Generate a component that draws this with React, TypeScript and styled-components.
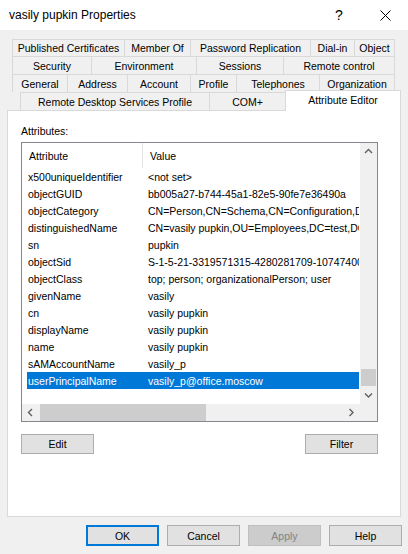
import React from "react";
import styled, { createGlobalStyle } from "styled-components";

const GlobalStyle = createGlobalStyle`
  html, body {
    margin: 0;
    padding: 0;
    background: #f0f0f0;
  }
  * {
    box-sizing: border-box;
  }
`;

const SWindow = styled.div`
  width: 408px;
  height: 554px;
  display: flex;
  flex-direction: column;
  background: #f0f0f0;
  font-family: "Liberation Sans", Arial, sans-serif;
  font-size: 10.5px;
  color: #000;
  overflow: hidden;
`;

const STitleBar = styled.div`
  height: 30px;
  background: #fff;
  display: flex;
  align-items: center;
  padding-left: 9px;
  flex-shrink: 0;
`;

const STitle = styled.div`
  flex: 1;
  font-size: 12px;
`;

const SWinButton = styled.div`
  width: 46px;
  height: 30px;
  display: grid;
  place-items: center;
  font-size: 14px;
`;

const STabStrip = styled.div`
  margin-top: 9px;
  display: flex;
  flex-direction: column;
`;

const STabRow = styled.div<{ $indent: number; $h: number }>`
  display: flex;
  height: ${(p) => p.$h}px;
  padding-left: ${(p) => p.$indent}px;
`;

const STab = styled.div<{ $w: number; $active?: boolean }>`
  width: ${(p) => p.$w}px;
  flex-shrink: 0;
  display: flex;
  align-items: center;
  justify-content: center;
  white-space: nowrap;
  border-top: 1px solid #d9d9d9;
  border-left: 1px solid #d9d9d9;
  background: #f0f0f0;
  &:last-child {
    border-right: 1px solid #d9d9d9;
  }
  ${(p) =>
    p.$active &&
    `
    background: #fff;
    margin-top: -2px;
    height: calc(100% + 3px);
    padding-bottom: 2px;
    position: relative;
    z-index: 1;
  `}
`;

const SPanel = styled.div`
  margin-left: 7px;
  width: 394px;
  height: 407px;
  flex-shrink: 0;
  background: #fff;
  border: 1px solid #d9d9d9;
  padding: 14px 0 0 13px;
  display: flex;
  flex-direction: column;
`;

const SLabel = styled.div`
  line-height: 13px;
  height: 13px;
`;

const SList = styled.div`
  margin-top: 4px;
  width: 357px;
  height: 280px;
  border: 1px solid #828790;
  background: #fff;
  display: grid;
  grid-template-columns: 338px 17px;
  grid-template-rows: 261px 17px;
`;

const SListContent = styled.div`
  overflow: hidden;
  display: flex;
  flex-direction: column;
`;

const SHeader = styled.div`
  height: 25px;
  display: flex;
  flex-shrink: 0;
`;

const SHeaderCell = styled.div<{ $w?: number }>`
  ${(p) => (p.$w ? `width: ${p.$w}px; border-right: 1px solid #e5e5e5;` : "flex: 1;")}
  padding-left: 7px;
  display: flex;
  align-items: center;
`;

const SRow = styled.div<{ $selected?: boolean }>`
  height: 17px;
  margin-left: 5px;
  width: 332px;
  display: flex;
  align-items: center;
  flex-shrink: 0;
  white-space: nowrap;
  overflow: hidden;
  background: ${(p) => (p.$selected ? "#0078d7" : "transparent")};
  color: ${(p) => (p.$selected ? "#fff" : "#000")};
`;

const SAttrCell = styled.div`
  width: 116px;
  flex-shrink: 0;
  padding-left: 1px;
`;

const SValueCell = styled.div`
  padding-left: 5px;
`;

const SVScroll = styled.div`
  background: #f0f0f0;
  display: flex;
  flex-direction: column;
`;

const SHScroll = styled.div`
  background: #f0f0f0;
  display: flex;
`;

const SCorner = styled.div`
  background: #f0f0f0;
`;

const SArrow = styled.div`
  width: 17px;
  height: 17px;
  flex-shrink: 0;
  display: grid;
  place-items: center;
`;

const SVTrack = styled.div`
  flex: 1;
  display: flex;
  flex-direction: column;
  justify-content: flex-end;
  padding: 0 1px 1px;
`;

const SHTrack = styled.div`
  flex: 1;
  display: flex;
  padding: 0 0 0 1px;
`;

const SThumb = styled.div<{ $w?: number; $h?: number }>`
  background: #cdcdcd;
  width: ${(p) => (p.$w ? `${p.$w}px` : "100%")};
  height: ${(p) => (p.$h ? `${p.$h}px` : "100%")};
`;

const SButtonRow = styled.div`
  margin-top: 12px;
  width: 357px;
  display: flex;
  justify-content: space-between;
`;

const SButton = styled.div<{ $h?: number; $default?: boolean; $disabled?: boolean }>`
  width: 73px;
  height: ${(p) => p.$h || 20}px;
  display: grid;
  place-items: center;
  background: ${(p) => (p.$disabled ? "#cccccc" : "#e1e1e1")};
  color: ${(p) => (p.$disabled ? "#838383" : "#000")};
  border: ${(p) =>
    p.$default ? "2px solid #0078d7" : p.$disabled ? "1px solid #bfbfbf" : "1px solid #adadad"};
`;

const SFooter = styled.div`
  margin-top: 8px;
  display: flex;
  justify-content: flex-end;
  gap: 8px;
  padding-right: 6px;
`;

const Chevron = ({ dir }: { dir: "up" | "down" | "left" | "right" }) => {
  const pts = {
    up: "1,5 4.5,1.5 8,5",
    down: "1,1.5 4.5,5 8,1.5",
    left: "5,1 1.5,4.5 5,8",
    right: "1.5,1 5,4.5 1.5,8",
  }[dir];
  const horiz = dir === "left" || dir === "right";
  return (
    <svg width={horiz ? 7 : 9} height={horiz ? 9 : 7} viewBox={horiz ? "0 0 7 9" : "0 0 9 7"}>
      <polyline points={pts} fill="none" stroke="#606060" strokeWidth="1.4" />
    </svg>
  );
};

const tabRows = [
  {
    indent: 12,
    h: 17,
    tabs: [
      ["Published Certificates", 112],
      ["Member Of", 66],
      ["Password Replication", 120],
      ["Dial-in", 44],
      ["Object", 41],
    ],
  },
  {
    indent: 12,
    h: 18,
    tabs: [
      ["Security", 79],
      ["Environment", 105],
      ["Sessions", 87],
      ["Remote control", 112],
    ],
  },
  {
    indent: 12,
    h: 18,
    tabs: [
      ["General", 55],
      ["Address", 60],
      ["Account", 63],
      ["Profile", 46],
      ["Telephones", 83],
      ["Organization", 76],
    ],
  },
  {
    indent: 20,
    h: 18,
    tabs: [
      ["Remote Desktop Services Profile", 189],
      ["COM+", 76],
      ["Attribute Editor", 116],
    ],
  },
] as { indent: number; h: number; tabs: [string, number][] }[];

const attributes = [
  ["x500uniqueIdentifier", "<not set>"],
  ["objectGUID", "bb005a27-b744-45a1-82e5-90fe7e36490a"],
  ["objectCategory", "CN=Person,CN=Schema,CN=Configuration,DC=test,DC=local"],
  ["distinguishedName", "CN=vasily pupkin,OU=Employees,DC=test,DC=local"],
  ["sn", "pupkin"],
  ["objectSid", "S-1-5-21-3319571315-4280281709-1074740000-1105"],
  ["objectClass", "top; person; organizationalPerson; user"],
  ["givenName", "vasily"],
  ["cn", "vasily pupkin"],
  ["displayName", "vasily pupkin"],
  ["name", "vasily pupkin"],
  ["sAMAccountName", "vasily_p"],
  ["userPrincipalName", "vasily_p@office.moscow"],
];

const App = () => {
  return (
    <>
      <GlobalStyle />
      <SWindow>
        <STitleBar>
          <STitle>vasily pupkin Properties</STitle>
          <SWinButton>?</SWinButton>
          <SWinButton>
            <svg width="11" height="11" viewBox="0 0 11 11">
              <path d="M0.5 0.5 L10.5 10.5 M10.5 0.5 L0.5 10.5" stroke="#000" strokeWidth="1" />
            </svg>
          </SWinButton>
        </STitleBar>

        <STabStrip>
          {tabRows.map((row, i) => (
            <STabRow key={i} $indent={row.indent} $h={row.h}>
              {row.tabs.map(([label, w]) => (
                <STab key={label} $w={w} $active={label === "Attribute Editor"}>
                  {label}
                </STab>
              ))}
            </STabRow>
          ))}
        </STabStrip>

        <SPanel>
          <SLabel>Attributes:</SLabel>
          <SList>
            <SListContent>
              <SHeader>
                <SHeaderCell $w={121}>Attribute</SHeaderCell>
                <SHeaderCell>Value</SHeaderCell>
              </SHeader>
              {attributes.map(([attr, val]) => (
                <SRow key={attr} $selected={attr === "userPrincipalName"}>
                  <SAttrCell>{attr}</SAttrCell>
                  <SValueCell>{val}</SValueCell>
                </SRow>
              ))}
            </SListContent>
            <SVScroll>
              <SArrow>
                <Chevron dir="up" />
              </SArrow>
              <SVTrack>
                <SThumb $h={17} />
              </SVTrack>
              <SArrow>
                <Chevron dir="down" />
              </SArrow>
            </SVScroll>
            <SHScroll>
              <SArrow>
                <Chevron dir="left" />
              </SArrow>
              <SHTrack>
                <SThumb $w={166} />
              </SHTrack>
              <SArrow>
                <Chevron dir="right" />
              </SArrow>
            </SHScroll>
            <SCorner />
          </SList>
          <SButtonRow>
            <SButton>Edit</SButton>
            <SButton>Filter</SButton>
          </SButtonRow>
        </SPanel>

        <SFooter>
          <SButton $h={21} $default>
            OK
          </SButton>
          <SButton $h={21}>Cancel</SButton>
          <SButton $h={21} $disabled>
            Apply
          </SButton>
          <SButton $h={21}>Help</SButton>
        </SFooter>
      </SWindow>
    </>
  );
};

export default App;
